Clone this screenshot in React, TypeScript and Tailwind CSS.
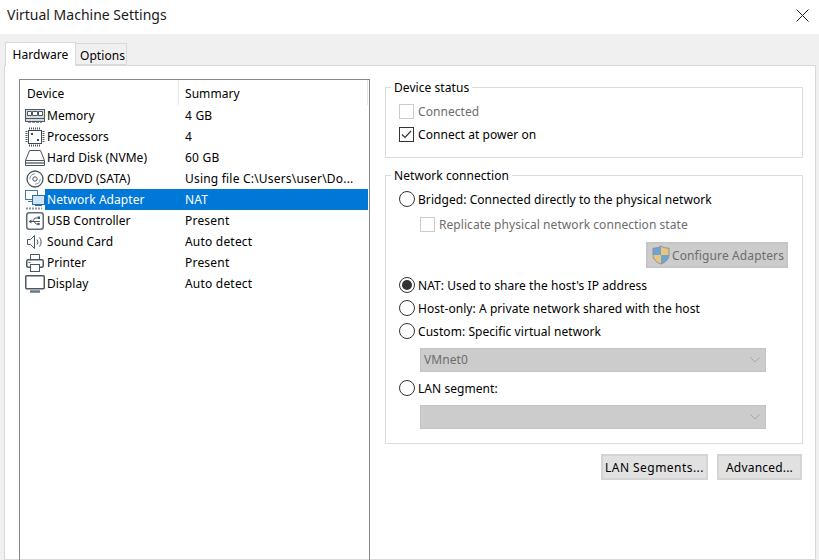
import type { ReactNode } from 'react';

const devices = [
  { name: 'Memory', summary: '4 GB', icon: <MemoryIcon /> },
  { name: 'Processors', summary: '4', icon: <CpuIcon /> },
  { name: 'Hard Disk (NVMe)', summary: '60 GB', icon: <DiskIcon /> },
  { name: 'CD/DVD (SATA)', summary: 'Using file C:\\Users\\user\\Do...', icon: <CdIcon /> },
  { name: 'Network Adapter', summary: 'NAT', icon: <NetworkIcon />, selected: true },
  { name: 'USB Controller', summary: 'Present', icon: <UsbIcon /> },
  { name: 'Sound Card', summary: 'Auto detect', icon: <SoundIcon /> },
  { name: 'Printer', summary: 'Present', icon: <PrinterIcon /> },
  { name: 'Display', summary: 'Auto detect', icon: <DisplayIcon /> },
];

function MemoryIcon() {
  return (
    <svg width="20" height="14" viewBox="0 0 20 14" fill="none">
      <rect x="0.5" y="0.5" width="19" height="12" fill="#d9dcdf" stroke="#4b5761" />
      <path d="M2.5 2.5h4v4h-4zM7.5 2.5h5v4h-5zM13.5 2.5h4v4h-4z" fill="#fff" stroke="#4b5761" />
      <path d="M1 9.5h18" stroke="#4b5761" />
      <path d="M3 13.5h14" stroke="#8d969e" strokeDasharray="3 1" />
    </svg>
  );
}

function CpuIcon() {
  return (
    <svg width="20" height="20" viewBox="0 0 20 20" fill="none">
      <rect x="3.5" y="3.5" width="13" height="13" fill="#fff" stroke="#3f4a54" />
      <path
        d="M4.500 .5v2M6.500 .5v2M8.500 .5v2M10.500 .5v2M12.500 .5v2M14.500 .5v2M4.500 17.500v2M6.500 17.500v2M8.500 17.500v2M10.500 17.500v2M12.500 17.500v2M14.500 17.500v2M.5 4.500h2M.5 6.500h2M.5 8.500h2M.5 10.500h2M.5 12.500h2M.5 14.500h2M17.500 4.500h2M17.500 6.500h2M17.500 8.500h2M17.500 10.500h2M17.500 12.500h2M17.500 14.500h2"
        stroke="#4b5761"
      />
      <rect x="6" y="6" width="2" height="2" fill="#3f4a54" />
      <rect x="12" y="12" width="2" height="2" fill="#3f4a54" />
    </svg>
  );
}

function DiskIcon() {
  return (
    <svg width="20" height="18" viewBox="0 0 20 18" fill="none">
      <path d="M4.500 1.500h11l4 10v5H.5v-5z" fill="#fff" stroke="#4b5761" />
      <path d="M.5 11.500h19" stroke="#4b5761" />
      <path d="M1 14h18" stroke="#8d969e" strokeWidth="2" />
    </svg>
  );
}

function CdIcon() {
  return (
    <svg width="18" height="18" viewBox="0 0 18 18" fill="none">
      <circle cx="9" cy="9" r="8" fill="#fff" stroke="#4b5761" strokeWidth="1.300" />
      <circle cx="9" cy="9" r="2.200" fill="#fff" stroke="#4b5761" />
      <path d="M3.800 9a5.200 5.200 0 0 1 5.200-5.200M14.200 9A5.200 5.200 0 0 1 9 14.200" stroke="#8d969e" />
    </svg>
  );
}

function NetworkIcon() {
  return (
    <svg width="20" height="20" viewBox="0 0 20 20" fill="none">
      <rect x="0.500" y="0.500" width="12" height="9" fill="#fff" stroke="#3d78a6" />
      <path d="M3 11.500h7" stroke="#3d78a6" />
      <rect x="7.500" y="5.500" width="12" height="9" fill="#cfe4f5" stroke="#2f6f9f" />
      <path d="M10 15.500h7" stroke="#2f6f9f" />
      <path d="M1 18.500h16" stroke="#8d969e" strokeWidth="2" strokeDasharray="2 1" />
    </svg>
  );
}

function UsbIcon() {
  return (
    <svg width="18" height="18" viewBox="0 0 18 18" fill="none">
      <rect x="0.750" y="0.750" width="16.500" height="16.500" rx="2.500" fill="#fff" stroke="#5f6b75" strokeWidth="1.500" />
      <path d="M5 9.500h9M6.500 9.500l2.500-3.500h2.500M8 9.500l2 2.500h1.500" stroke="#4b5761" />
      <path d="M2.500 9.500l3-2v4z" fill="#4b5761" />
      <rect x="11.500" y="4.500" width="2.500" height="2.500" fill="#4b5761" />
      <circle cx="12.500" cy="12" r="1.300" fill="#4b5761" />
    </svg>
  );
}

function SoundIcon() {
  return (
    <svg width="16" height="16" viewBox="0 0 16 16" fill="none">
      <path d="M.5 5.500h3l4-4v13l-4-4h-3z" fill="#fff" stroke="#4b5761" />
      <path d="M10 5.500a4 4 0 0 1 0 5M12.500 3.500a7 7 0 0 1 0 9" stroke="#4b5761" />
    </svg>
  );
}

function PrinterIcon() {
  return (
    <svg width="18" height="18" viewBox="0 0 18 18" fill="none">
      <path d="M4.500 5.500v-5h9v5" fill="#fff" stroke="#4b5761" />
      <rect x="0.750" y="5.750" width="16.500" height="7.500" rx="1.500" fill="#fff" stroke="#4b5761" strokeWidth="1.500" />
      <rect x="4.500" y="10.500" width="9" height="7" fill="#fff" stroke="#4b5761" />
      <rect x="2.500" y="8" width="2" height="1" fill="#4b5761" />
    </svg>
  );
}

function DisplayIcon() {
  return (
    <svg width="20" height="18" viewBox="0 0 20 18" fill="none">
      <rect x="0.750" y="0.750" width="18.500" height="13" rx="1" fill="#fff" stroke="#4b5761" strokeWidth="1.500" />
      <path d="M5 16.500h10" stroke="#6b7680" strokeWidth="2.500" />
    </svg>
  );
}

function ShieldIcon() {
  return (
    <svg width="18" height="20" viewBox="0 0 18 20" fill="none">
      <path d="M9 1C7 2.500 4 3.200 1 3.200V10c0 4 3.500 7.500 8 9 4.500-1.500 8-5 8-9V3.200C14 3.200 11 2.500 9 1z" fill="#e8c77c" />
      <path d="M9 1C7 2.500 4 3.200 1 3.200V10h8zM9 10v9c4.500-1.500 8-5 8-9z" fill="#6fa3d4" />
      <path d="M9 1C7 2.500 4 3.200 1 3.200V10c0 4 3.500 7.500 8 9 4.500-1.500 8-5 8-9V3.200C14 3.200 11 2.500 9 1z" stroke="#8a9199" />
    </svg>
  );
}

function Check({ checked, disabled, label }: { checked?: boolean; disabled?: boolean; label: string }) {
  return (
    <div className="flex items-center h-[20px]">
      <span
        className={`flex items-center justify-center w-[15px] h-[15px] bg-white border mr-[4px] ${
          disabled ? 'border-[#cccccc]' : 'border-[#333333]'
        }`}
      >
        {checked && (
          <svg width="11" height="9" viewBox="0 0 11 9" fill="none">
            <path d="M1 4.500l3 3L10 1" stroke="#333333" strokeWidth="1.200" />
          </svg>
        )}
      </span>
      <span className={`pt-px ${disabled ? 'text-[#6d6d6d]' : ''}`}>{label}</span>
    </div>
  );
}

function Radio({ checked, label }: { checked?: boolean; label: string }) {
  return (
    <div className="flex items-center h-[20px]">
      <span className="flex items-center justify-center w-[16px] h-[16px] rounded-full bg-white border border-[#333333] mr-[3px]">
        {checked && <span className="w-[10px] h-[10px] rounded-full bg-[#333333]" />}
      </span>
      <span className="pt-px">{label}</span>
    </div>
  );
}

function Group({ title, className, children }: { title: string; className: string; children: ReactNode }) {
  return (
    <div className={`relative border border-[#dcdcdc] px-[13px] ${className}`}>
      <span className="absolute -top-[8px] left-[5px] bg-white px-[3px] leading-[16px]">{title}</span>
      {children}
    </div>
  );
}

function DisabledSelect({ value }: { value?: string }) {
  return (
    <div className="flex items-center justify-between w-[346px] h-[24px] ml-[21px] bg-[#cccccc] border border-[#c4c4c4] pl-[3px] pr-[5px] text-[#6d6d6d]">
      <span>{value}</span>
      <svg width="10" height="6" viewBox="0 0 10 6" fill="none">
        <path d="M.5.500L5 5l4.500-4.500" stroke="#a6a6a6" />
      </svg>
    </div>
  );
}

export default function App() {
  return (
    <div
      className="flex flex-col w-[819px] h-[560px] overflow-hidden bg-white text-[12px] leading-[16px] tracking-[0.06px] text-black"
      style={{ fontFamily: '"Noto Sans", "Liberation Sans", sans-serif' }}
    >
      <div className="flex items-center justify-between h-[34px] shrink-0 pl-[7px] pr-[10px] pb-[4px]">
        <span className="text-[14px] tracking-normal text-[#1a1a1a]">Virtual Machine Settings</span>
        <svg width="13" height="13" viewBox="0 0 13 13" fill="none">
          <path d="M.5.500l12 12M12.500.500l-12 12" stroke="#222222" />
        </svg>
      </div>

      <div className="flex flex-col flex-1 min-h-0 bg-[#f0f0f0] pl-[4px] pr-[3px]">
        <div className="flex items-end h-[32px] shrink-0 pl-px relative z-10 -mb-px">
          <div className="flex items-center justify-center w-[71px] h-[24px] bg-white border border-b-0 border-[#d9d9d9]">
            Hardware
          </div>
          <div className="flex items-center justify-center w-[51px] h-[22px] mb-px pt-[3px] pl-[3px] bg-[#f0f0f0] border border-l-0 border-[#d9d9d9]">
            Options
          </div>
        </div>

        <div className="flex flex-1 min-h-0 bg-white border border-[#d9d9d9] pt-[13px] pl-[14px]">
          <div className="w-[351px] h-[600px] shrink-0 border border-[#828790] pr-px">
            <div className="flex h-[25px]">
              <div className="w-[159px] pl-[7px] pt-[6px] border-r border-[#e5e5e5]">Device</div>
              <div className="flex-1 pl-[6px] pt-[6px] border-r border-[#e5e5e5]">Summary</div>
            </div>
            {devices.map((d) => (
              <div key={d.name} className="flex items-center h-[21px]">
                <div className="flex items-center justify-center w-[25px] h-full shrink-0 pl-[4px]">{d.icon}</div>
                <div className={`flex items-center flex-1 h-full ${d.selected ? 'bg-[#0078d7] text-white' : ''}`}>
                  <span className="w-[140px] pl-[2px]">{d.name}</span>
                  <span className="tracking-[0.2px]">{d.summary}</span>
                </div>
              </div>
            ))}
          </div>

          <div className="w-[418px] ml-[15px] pt-[8px] shrink-0">
            <Group title="Device status" className="h-[71px] pt-[13px]">
              <Check disabled label="Connected" />
              <div className="mt-[3px]">
                <Check checked label="Connect at power on" />
              </div>
            </Group>

            <Group title="Network connection" className="h-[269px] mt-[17px] pt-[13px]">
              <Radio label="Bridged: Connected directly to the physical network" />
              <div className="ml-[21px] mt-[5px]">
                <Check disabled label="Replicate physical network connection state" />
              </div>
              <div className="flex justify-end mt-[8px] mr-[1px]">
                <div className="flex items-center w-[142px] h-[26px] bg-[#cccccc] border-2 border-[#c6c6c6] text-[#6d6d6d] pl-[4px]">
                  <ShieldIcon />
                  <span className="ml-[2px] pt-px tracking-[0.12px]">Configure Adapters</span>
                </div>
              </div>
              <div className="mt-[7px]">
                <Radio checked label="NAT: Used to share the host's IP address" />
              </div>
              <div className="mt-[3px]">
                <Radio label="Host-only: A private network shared with the host" />
              </div>
              <div className="mt-[3px]">
                <Radio label="Custom: Specific virtual network" />
              </div>
              <div className="mt-[7px]">
                <DisabledSelect value="VMnet0" />
              </div>
              <div className="mt-[6px]">
                <Radio label="LAN segment:" />
              </div>
              <div className="mt-[7px]">
                <DisabledSelect />
              </div>
            </Group>

            <div className="flex justify-end gap-[9px] mt-[10px] pr-px">
              <button className="w-[107px] h-[26px] pt-px bg-[#e1e1e1] border-2 border-[#d4d4d4] tracking-[0.45px]">LAN Segments...</button>
              <button className="w-[85px] h-[26px] pt-px bg-[#e1e1e1] border-2 border-[#d4d4d4] tracking-[0.2px]">Advanced...</button>
            </div>
          </div>
        </div>
      </div>
    </div>
  );
}
